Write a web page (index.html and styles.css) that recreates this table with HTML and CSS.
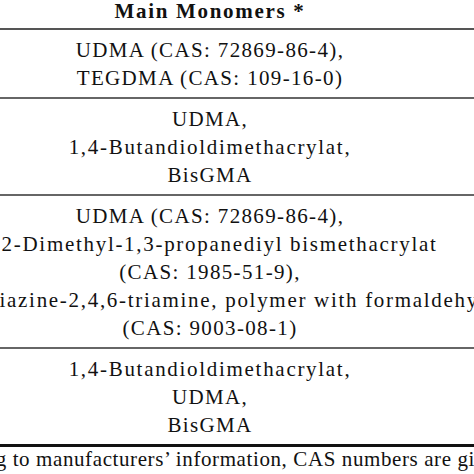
FILE: index.html
```html
<!DOCTYPE html>
<html>
<head>
<meta charset="utf-8">
<link rel="stylesheet" href="styles.css">
</head>
<body>
<div class="crop">
  <table class="tbl">
    <thead>
      <tr><th>Main Monomers *</th></tr>
    </thead>
    <tbody>
      <tr><td>UDMA (CAS: 72869-86-4),<br>TEGDMA (CAS: 109-16-0)</td></tr>
      <tr><td>UDMA,<br><span class="chem">1,4-Butandioldimethacrylat,</span><br>BisGMA</td></tr>
      <tr><td>UDMA (CAS: 72869-86-4),<br><span class="chem">2,2-Dimethyl-1,3-propanediyl bismethacrylat</span><br>(CAS: 1985-51-9),<br><span class="chem">1,3,5-Triazine-2,4,6-triamine, polymer with formaldehyde</span><br>(CAS: 9003-08-1)</td></tr>
      <tr class="last"><td><span class="chem">1,4-Butandioldimethacrylat,</span><br>UDMA,<br>BisGMA</td></tr>
    </tbody>
  </table>
  <p class="note">* According to manufacturers’ information, CAS numbers are given in brackets.</p>
</div>
</body>
</html>
```
FILE: styles.css
```css
html, body {
  margin: 0;
  padding: 0;
  background: #fff;
}
.crop {
  width: 474px;
  height: 474px;
  overflow: hidden;
  font-family: "Liberation Serif", "Times New Roman", serif;
  color: #111;
}
.tbl {
  border-collapse: collapse;
  width: 800px;
  margin-left: -190px;
  font-size: 21px;
  letter-spacing: 1.35px;
  line-height: 28px;
}
.tbl th {
  font-weight: bold;
  text-align: center;
  letter-spacing: 1.7px;
  padding: 0 0 6px 0;
  line-height: 22px;
  border-bottom: 2px solid #555;
}
.tbl td {
  text-align: center;
  padding: 6px 0 5px 0;
  border-bottom: 2px solid #666;
  white-space: nowrap;
}
.tbl .chem {
  letter-spacing: 1.7px;
}
.tbl tr.last td {
  border-bottom: 3px solid #111;
}
.note {
  margin: 0 0 0 -103px;
  font-size: 21px;
  letter-spacing: 0.6px;
  line-height: 24px;
  white-space: nowrap;
}
```
